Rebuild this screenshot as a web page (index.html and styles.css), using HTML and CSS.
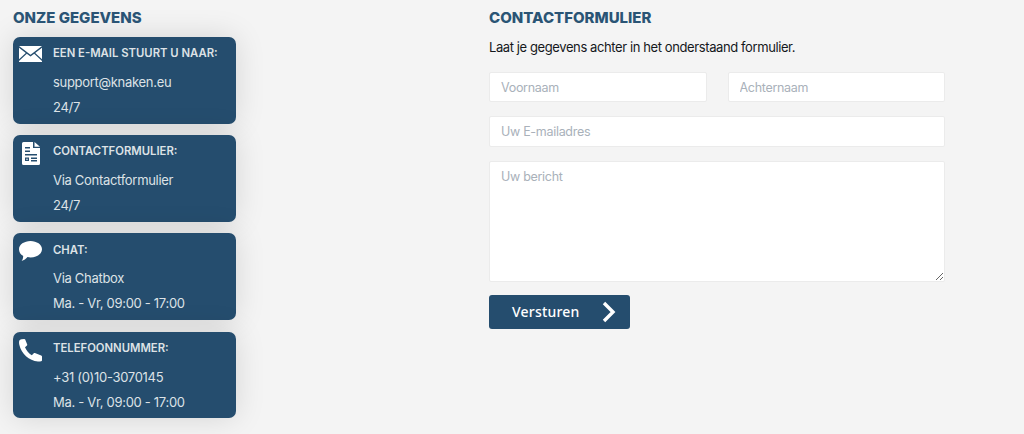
FILE: index.html
```html
<!DOCTYPE html>
<html lang="nl">
<head>
  <meta charset="UTF-8">
  <meta name="viewport" content="width=device-width, initial-scale=1.0">
  <title>Contact</title>
  <link rel="stylesheet" href="styles.css">
</head>
<body>
  <div class="page">
    <section class="gegevens">
      <h2>Onze gegevens</h2>

      <div class="kaart">
        <div class="kaart-icon">
          <svg class="icon-mail" width="23" height="16" viewBox="0 0 23 16"><path fill="#fff" d="M0 0h23L11.500 8.800zM0 1.700l6.800 5.300L0 13.200zM23 1.700v11.500l-6.800-6.200zM7.800 7.800l3.700 2.800 3.700-2.800L23 15v1H0v-1z"/></svg>
        </div>
        <div class="kaart-tekst">
          <h3>Een e-mail stuurt u naar:</h3>
          <p>support@knaken.eu</p>
          <p>24/7</p>
        </div>
      </div>

      <div class="kaart">
        <div class="kaart-icon">
          <svg class="icon-doc" width="18" height="23" viewBox="0 0 18 23"><path fill="#fff" fill-rule="evenodd" d="M1.500 0H11v6h7v15.500a1.500 1.500 0 0 1-1.500 1.500h-15A1.500 1.500 0 0 1 0 21.500v-20A1.500 1.500 0 0 1 1.500 0zM3 5v1.500h5V5zM3 8.500V10h5V8.500zM3 12v1.500h12V12zM3 15.500V19h4v-3.500zM4.200 16.700h1.600v1.100H4.200zM9 15.500V17h6v-1.500zM9 18v1.500h6V18zM12.500 0 18 4.800h-5.500z"/></svg>
        </div>
        <div class="kaart-tekst">
          <h3>Contactformulier:</h3>
          <p>Via Contactformulier</p>
          <p>24/7</p>
        </div>
      </div>

      <div class="kaart">
        <div class="kaart-icon">
          <svg width="23" height="20" viewBox="0 0 23 20"><path fill="#fff" d="M11.500 0C17.800 0 23 3.600 23 8.200s-5.200 8.200-11.500 8.200c-1 0-2-.1-3-.3C7 18 5 19.400 2.600 20c1-1.200 1.500-2.700 1.600-5C1.600 13.500 0 11 0 8.200 0 3.600 5.200 0 11.500 0z"/></svg>
        </div>
        <div class="kaart-tekst">
          <h3 class="kop-chat">Chat:</h3>
          <p>Via Chatbox</p>
          <p>Ma. - Vr, 09:00 - 17:00</p>
        </div>
      </div>

      <div class="kaart">
        <div class="kaart-icon">
          <svg class="icon-tel" width="23" height="23" viewBox="0 0 23 23"><path fill="#fff" d="M2.500.300 5.200 0c.5 0 .8.200 1 .6l2 4.800c.2.400.1.800-.2 1.100L6 8.300c1.300 3.200 3.800 6.300 6.800 8l2-2c.3-.3.700-.4 1.100-.2l6.300 2.400c.5.200.8.600.8 1v3.700c0 .6-.4 1-1 1.100-.9.300-2 .3-3 .2C10 21.800 2.300 14.600.3 5.800 0 4.600 0 3.500.100 2.500.300 1.300 1.300.4 2.500.300z"/></svg>
        </div>
        <div class="kaart-tekst">
          <h3>Telefoonnummer:</h3>
          <p>+31 (0)10-3070145</p>
          <p>Ma. - Vr, 09:00 - 17:00</p>
        </div>
      </div>
    </section>

    <section class="formulier">
      <h2>Contactformulier</h2>
      <p class="intro">Laat je gegevens achter in het onderstaand formulier.</p>
      <form>
        <div class="rij">
          <input type="text" placeholder="Voornaam">
          <input type="text" placeholder="Achternaam">
        </div>
        <input type="email" placeholder="Uw E-mailadres">
        <textarea placeholder="Uw bericht"></textarea>
        <button type="submit">
          <span>Versturen</span>
          <svg width="14" height="22" viewBox="0 0 14 22"><path fill="none" stroke="#fff" stroke-width="3.400" d="M2 2l9 9-9 9"/></svg>
        </button>
      </form>
    </section>
  </div>
</body>
</html>
```

FILE: styles.css
```css
* { box-sizing: border-box; }
html, body { height: 100%; }
body { margin: 0; background: #f4f4f4; font-family: Inter, "Liberation Sans", sans-serif; overflow: hidden; }
.page { display: grid; grid-template-columns: 223px 456px; column-gap: 253px; padding: 9px 0 0 13px; }

h2 { margin: 0; font-size: 15px; line-height: 18px; font-weight: 800; color: #2a5475; text-transform: uppercase; }

.gegevens h2 { margin-bottom: 10px; }
.kaart { display: flex; height: 86.500px; margin-bottom: 11.700px; padding: 8px 6px 0; background: #254d6e; border-radius: 7px; color: #dde2e6; box-shadow: 0 0 30px rgba(0, 0, 0, .13); }
.kaart-icon { flex: 0 0 34px; display: flex; justify-content: center; align-items: flex-start; padding-right: 11px; }
.icon-mail { margin-top: 1px; }
.icon-doc { margin-top: -1px; }
.icon-tel { margin-top: -1px; }
.kaart-tekst h3 { margin: 0 0 13px; font-size: 11.300px; line-height: 16px; font-weight: 600; text-transform: uppercase; }
.kaart-tekst .kop-chat { margin-top: 1px; margin-bottom: 12px; }
.kaart-tekst p { margin: 0 0 9px; font-size: 13px; line-height: 16px; letter-spacing: -.3px; }

.formulier .intro { margin: 11px 0 15.500px; font-size: 13px; line-height: 18px; letter-spacing: -.4px; color: #14181c; }
form { display: flex; flex-direction: column; gap: 14px; }
.rij { display: grid; grid-template-columns: 1fr 1fr; column-gap: 21px; }
input, textarea { display: block; width: 100%; padding: 0 11px; border: 1px solid #ebebeb; border-radius: 2px; background: #fff; font-family: Inter, "Liberation Sans", sans-serif; font-size: 12.500px; letter-spacing: -.3px; color: #333; }
input { height: 30.500px; padding-top: 1px; }
textarea { height: 121px; padding-top: 7px; }
::placeholder { color: #a9b1ba; opacity: 1; }

button { display: flex; align-items: center; justify-content: space-between; width: 141px; height: 34px; margin-top: -1px; padding: 0 14px 0 23px; border: 0; border-radius: 3px; background: #254d6e; color: #fff; font-family: "Noto Sans", sans-serif; font-size: 14px; font-weight: 500; letter-spacing: .2px; }
```
